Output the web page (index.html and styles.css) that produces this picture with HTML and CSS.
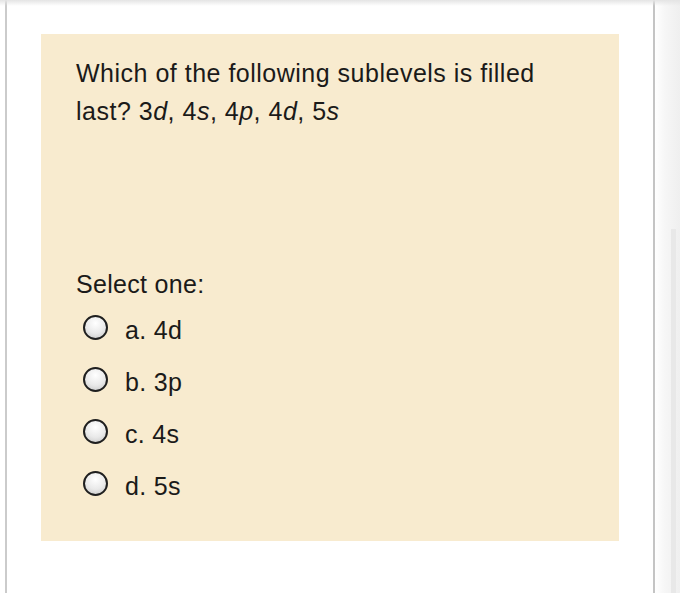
FILE: index.html
```html
<!DOCTYPE html>
<html lang="en">
<head>
<meta charset="utf-8">
<title>Question</title>
<link rel="stylesheet" href="styles.css">
</head>
<body>
<div class="page">
  <div class="frame">
    <div class="card">
      <p class="question">Which of the following sublevels is filled last? 3<i class="term">d</i>, 4<i class="term">s</i>, 4<i class="term">p</i>, 4<i class="term">d</i>, 5<i class="term">s</i></p>
      <p class="prompt">Select one:</p>
      <ul class="options">
        <li class="option"><span class="radio"></span><span class="label">a. 4d</span></li>
        <li class="option"><span class="radio"></span><span class="label">b. 3p</span></li>
        <li class="option"><span class="radio"></span><span class="label">c. 4s</span></li>
        <li class="option"><span class="radio"></span><span class="label">d. 5s</span></li>
      </ul>
    </div>
  </div>
  <div class="gutter"><div class="thumb"></div></div>
</div>
<div class="topshade"></div>
</body>
</html>
```

FILE: styles.css
```css
html, body {
  margin: 0;
  padding: 0;
  background: #ffffff;
  width: 680px;
  height: 593px;
  overflow: hidden;
}
body {
  font-family: "Liberation Sans", Arial, sans-serif;
  color: #1b1a19;
  position: relative;
}
.page {
  display: flex;
  height: 593px;
}
.frame {
  margin-left: 5px;
  width: 646px;
  border-left: 2px solid #cbcbcb;
  border-right: 2px solid #c4c4c4;
  background: #ffffff;
}
.card {
  margin: 34px 0 0 34px;
  width: 578px;
  height: 507px;
  box-sizing: border-box;
  background: #f8ebcf;
  padding: 20px 60px 0 34px;
}
.question {
  margin: 0;
  font-size: 25px;
  line-height: 38px;
  letter-spacing: 0.5px;
  padding-left: 1px;
}
.term {
  font-style: italic;
}
.prompt {
  margin: 135px 0 0 0;
  font-size: 25px;
  line-height: 38px;
  letter-spacing: 0.3px;
  padding-left: 1px;
}
.options {
  list-style: none;
  margin: 1px 0 0 0;
  padding: 0;
}
.option {
  display: flex;
  align-items: center;
  height: 52px;
  font-size: 25px;
  line-height: 52px;
  letter-spacing: 0.3px;
}
.radio {
  width: 25px;
  height: 25px;
  box-sizing: border-box;
  border-radius: 50%;
  border: 2px solid #1f1f1f;
  background: radial-gradient(circle at 50% 30%, #ffffff 0%, #e9e9e9 55%, #c4c4c4 100%);
  margin: -6px 17px 0 8px;
  flex: none;
}
.gutter {
  flex: 1;
  background: linear-gradient(to right, #ffffff 0%, #f6f6f6 40%, #efefef 100%);
  display: flex;
}
.thumb {
  margin: 229px 0 0 16px;
  width: 5px;
  height: 364px;
  background: #e8e8e8;
}
.topshade {
  position: absolute;
  left: 0;
  top: 0;
  width: 680px;
  height: 6px;
  background: linear-gradient(#e4e4e4, rgba(255, 255, 255, 0));
}
```
